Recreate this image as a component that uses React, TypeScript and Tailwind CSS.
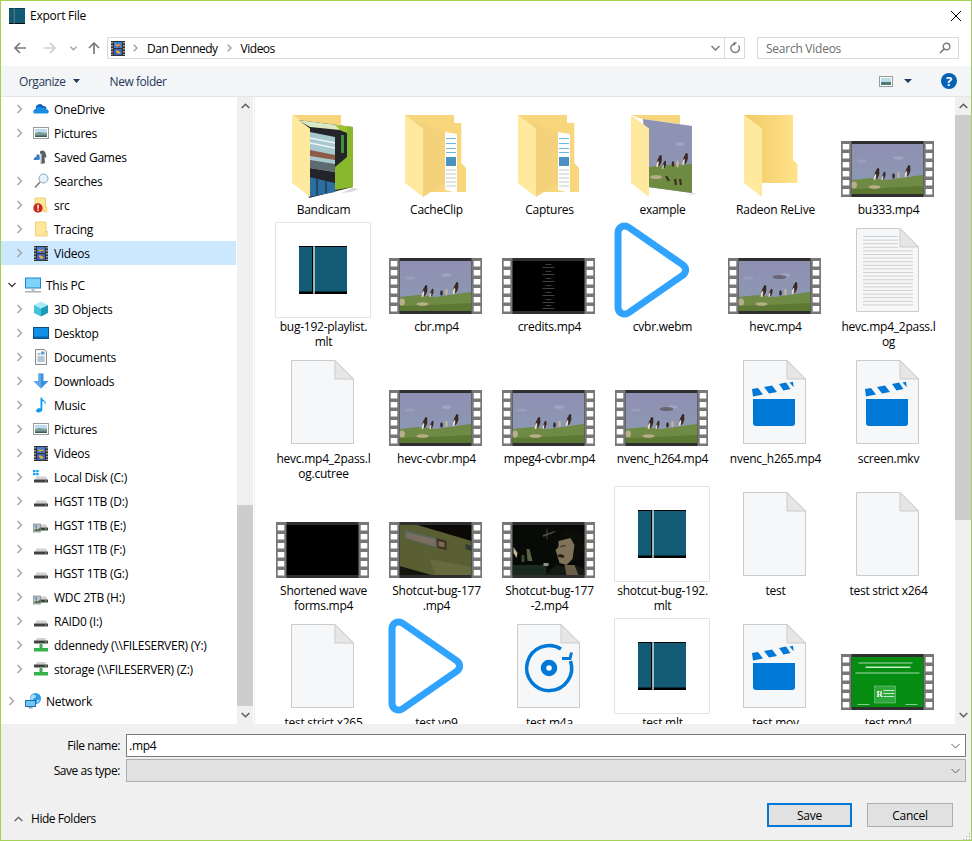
import type { ReactNode } from 'react';

type TreeIcon =
  | 'onedrive' | 'pictures' | 'games' | 'search' | 'src' | 'folder' | 'film' | 'pc' | 'cube' | 'desktop'
  | 'docs' | 'down' | 'music' | 'diskC' | 'disk' | 'diskPhoto' | 'net' | 'network';

type ThumbKind =
  | 'folder' | 'folderDoc' | 'folderBandicam' | 'folderPic' | 'mlt' | 'play' | 'doc' | 'log' | 'clapper' | 'groove'
  | 'puffin' | 'puffin2' | 'credits' | 'black' | 'building' | 'man' | 'green';

const favourites: { label: string; icon: TreeIcon; noArrow?: boolean; active?: boolean }[] = [
  { label: 'OneDrive', icon: 'onedrive' },
  { label: 'Pictures', icon: 'pictures' },
  { label: 'Saved Games', icon: 'games', noArrow: true },
  { label: 'Searches', icon: 'search' },
  { label: 'src', icon: 'src' },
  { label: 'Tracing', icon: 'folder' },
  { label: 'Videos', icon: 'film', active: true },
];

const pcItems: { label: string; icon: TreeIcon }[] = [
  { label: '3D Objects', icon: 'cube' },
  { label: 'Desktop', icon: 'desktop' },
  { label: 'Documents', icon: 'docs' },
  { label: 'Downloads', icon: 'down' },
  { label: 'Music', icon: 'music' },
  { label: 'Pictures', icon: 'pictures' },
  { label: 'Videos', icon: 'film' },
  { label: 'Local Disk (C:)', icon: 'diskC' },
  { label: 'HGST 1TB (D:)', icon: 'disk' },
  { label: 'HGST 1TB (E:)', icon: 'diskPhoto' },
  { label: 'HGST 1TB (F:)', icon: 'disk' },
  { label: 'HGST 1TB (G:)', icon: 'disk' },
  { label: 'WDC 2TB (H:)', icon: 'diskPhoto' },
  { label: 'RAID0 (I:)', icon: 'disk' },
  { label: 'ddennedy (\\\\FILESERVER) (Y:)', icon: 'net' },
  { label: 'storage (\\\\FILESERVER) (Z:)', icon: 'net' },
];

const files: { lines: string[]; kind: ThumbKind }[] = [
  { lines: ['Bandicam'], kind: 'folderBandicam' },
  { lines: ['CacheClip'], kind: 'folderDoc' },
  { lines: ['Captures'], kind: 'folderDoc' },
  { lines: ['example'], kind: 'folderPic' },
  { lines: ['Radeon ReLive'], kind: 'folder' },
  { lines: ['bu333.mp4'], kind: 'puffin' },
  { lines: ['bug-192-playlist.', 'mlt'], kind: 'mlt' },
  { lines: ['cbr.mp4'], kind: 'puffin' },
  { lines: ['credits.mp4'], kind: 'credits' },
  { lines: ['cvbr.webm'], kind: 'play' },
  { lines: ['hevc.mp4'], kind: 'puffin2' },
  { lines: ['hevc.mp4_2pass.l', 'og'], kind: 'log' },
  { lines: ['hevc.mp4_2pass.l', 'og.cutree'], kind: 'doc' },
  { lines: ['hevc-cvbr.mp4'], kind: 'puffin' },
  { lines: ['mpeg4-cvbr.mp4'], kind: 'puffin' },
  { lines: ['nvenc_h264.mp4'], kind: 'puffin2' },
  { lines: ['nvenc_h265.mp4'], kind: 'clapper' },
  { lines: ['screen.mkv'], kind: 'clapper' },
  { lines: ['Shortened wave', 'forms.mp4'], kind: 'black' },
  { lines: ['Shotcut-bug-177', '.mp4'], kind: 'building' },
  { lines: ['Shotcut-bug-177', '-2.mp4'], kind: 'man' },
  { lines: ['shotcut-bug-192.', 'mlt'], kind: 'mlt' },
  { lines: ['test'], kind: 'doc' },
  { lines: ['test strict x264'], kind: 'doc' },
  { lines: ['test strict x265'], kind: 'doc' },
  { lines: ['test.vp9'], kind: 'play' },
  { lines: ['test.m4a'], kind: 'groove' },
  { lines: ['test.mlt'], kind: 'mlt' },
  { lines: ['test.mov'], kind: 'clapper' },
  { lines: ['test.mp4'], kind: 'green' },
];

function ShotcutIcon({ size }: { size: number }) {
  return (
    <svg width={size} height={size} viewBox="0 0 48 48" className="shrink-0">
      <rect width="48" height="48" fill="#135a74" />
      <rect width="48" height="1" fill="#000" />
      <rect y="45.5" width="48" height="2.5" fill="#000" />
      <rect x="13" width="1.4" height="48" fill="#000" />
      <rect x="14.4" width="1.2" height="48" fill="#fff" />
    </svg>
  );
}

function SmallDisk() {
  return (
    <g>
      <path d="M2 10.500L3.500 7.500h9.500l1.500 3z" fill="#d0d0d0" />
      <rect x="1" y="10.500" width="14" height="3" rx="0.500" fill="#404040" />
      <rect x="12" y="11.500" width="1.500" height="1" fill="#5fe04c" />
    </g>
  );
}

function TreeGlyph({ name }: { name: TreeIcon }) {
  const body: Record<TreeIcon, ReactNode> = {
    onedrive: (
      <>
        <path d="M3 8.500a4 4 0 0 1 7.200-3.400A3 3 0 0 1 13.500 8H3z" fill="#0a5fb4" />
        <path d="M1 12.500a2.600 2.600 0 0 1 1.800-4.400 3.400 3.400 0 0 1 6.200-1 2.800 2.800 0 0 1 4 1.300 2.200 2.200 0 0 1 1.500 4.100z" fill="#1c8be4" />
      </>
    ),
    pictures: (
      <>
        <rect x="0.500" y="2.500" width="15" height="11" fill="#fff" stroke="#9a9a9a" />
        <rect x="2" y="4" width="12" height="4" fill="#bcdcec" />
        <path d="M2 8l4-1 8 1v4H2z" fill="#7a9c92" />
        <rect x="2" y="10.500" width="12" height="1.500" fill="#3a5a50" />
      </>
    ),
    games: (
      <>
        <path d="M7 2.500c2-2 5-1 5.500 1.500l1 4-2 1 .5 5c-2 1-4 1-5 0V6.500z" fill="#5a5f66" />
        <path d="M7 5c1-1 2 0 1.500 2v7c-1 .5-1.500 0-1.500-1z" fill="#d9dde0" />
        <circle cx="5" cy="7" r="1.700" fill="#3d7fc9" />
        <path d="M0.500 11c0-2.500 2-3.500 4.500-3.500 1.500 0 2 1 2 2l-1 1.500H0.500z" fill="#3d7fc9" />
      </>
    ),
    search: (
      <>
        <circle cx="10.500" cy="5.500" r="4.500" fill="#e3f2fd" stroke="#8ba2b3" />
        <path d="M7 9l-5 5.500" stroke="#7d7d7d" strokeWidth="1.600" />
      </>
    ),
    src: (
      <>
        <path d="M2 1h10.500v13H2z" fill="#ffe89a" stroke="#e7c669" strokeWidth="0.800" />
        <rect x="11.500" y="10" width="2.500" height="5" fill="#ffe89a" stroke="#e7c669" strokeWidth="0.600" />
        <circle cx="5" cy="11" r="4.700" fill="#c7281b" />
        <rect x="4.300" y="7.700" width="1.500" height="4" fill="#fff" />
        <rect x="4.300" y="12.500" width="1.500" height="1.400" fill="#fff" />
      </>
    ),
    folder: (
      <>
        <path d="M2.500 1h10.500v14H2.500z" fill="#ffe89a" stroke="#e7c669" strokeWidth="0.800" />
        <rect x="12" y="10.500" width="2.500" height="4.500" fill="#ffe89a" stroke="#e7c669" strokeWidth="0.600" />
      </>
    ),
    film: (
      <>
        <rect x="1" y="1" width="14" height="15" fill="#333" />
        <path d="M2 2v1.500M2 5v1.500M2 8v1.500M2 11v1.500M2 14v1M14 2v1.500M14 5v1.500M14 8v1.500M14 11v1.500M14 14v1" stroke="#d8d8d8" strokeWidth="1.200" />
        <rect x="4" y="2" width="8" height="6" fill="#3b7dd6" />
        <rect x="4" y="9" width="8" height="6" fill="#3563c4" />
        <path d="M5 3l2 2 2-1 2 2-2 1-3-1zM6 10l3 1 2 2-3 1-2-2z" fill="#e8ae2b" />
        <circle cx="9" cy="6.500" r="1" fill="#c42d2d" />
      </>
    ),
    pc: (
      <>
        <rect x="0" y="0.500" width="16" height="11" fill="#1c84d4" />
        <rect x="1" y="1.500" width="14" height="9" fill="#7fd3fb" />
        <rect x="6.500" y="11.500" width="3" height="2.500" fill="#b8bfc6" />
        <rect x="0" y="14" width="16" height="1.500" fill="#a9b3bc" />
      </>
    ),
    cube: (
      <>
        <path d="M8 0.500l7 3.500-7 3.500L1 4z" fill="#a6ecf4" />
        <path d="M1 4l7 3.500v8L1 12z" fill="#44c3d8" />
        <path d="M15 4L8 7.500v8l7-3.500z" fill="#1b9cb8" />
      </>
    ),
    desktop: (
      <>
        <rect x="0.500" y="2.500" width="15" height="11" fill="#0e90e8" stroke="#0b4f85" />
        <rect x="1" y="11.500" width="14" height="1.500" fill="#0a63a8" />
      </>
    ),
    docs: (
      <>
        <path d="M2.500 0.500h9l2 2v13h-11z" fill="#f6f6f6" stroke="#8b8b8b" />
        <path d="M4.500 5h3M4.500 8h7M4.500 10h7M4.500 12h7" stroke="#6d95b5" />
        <rect x="8" y="2.500" width="3.500" height="3" fill="#5aa3d6" />
      </>
    ),
    down: (
      <>
        <path d="M5.500 0.500h5v7.500H15.500L8 15.500.5 8h5z" fill="#3a90e0" />
        <path d="M8 15.500L.5 8h5V.5H8z" fill="#5ba9ee" />
      </>
    ),
    music: (
      <path d="M7.500 0.500h1.300c.5 3 5 3 4 7.500-.5-2.500-2-3.500-3.500-3.800V12.500c0 2-2 3-4 3s-2.500-1.500-2-2.500c.7-1.500 2.800-2 4.200-1.500z" fill="#0d9af2" />
    ),
    diskC: (
      <>
        <SmallDisk />
        <path d="M0 1h2.500v2.300H0zM3.200 1h2.500v2.300H3.200zM0 4h2.500v2.300H0zM3.200 4h2.500v2.300H3.200z" fill="#12a5f4" />
      </>
    ),
    disk: <SmallDisk />,
    diskPhoto: (
      <>
        <SmallDisk />
        <rect x="0.500" y="7" width="7" height="8" fill="#b7c3c9" stroke="#6b7378" strokeWidth="0.600" />
        <circle cx="3" cy="9.500" r="1" fill="#3f79b3" />
        <path d="M1 14l2-2.500 2 1 2-2v3.500z" fill="#4f6f4a" />
      </>
    ),
    net: (
      <>
        <path d="M2.500 3.500L4 1h8l1.500 2.500z" fill="#d0d0d0" />
        <rect x="1" y="3.500" width="14" height="3" rx="0.500" fill="#404040" />
        <rect x="12" y="4.500" width="1.500" height="1" fill="#5fe04c" />
        <rect x="6.500" y="7" width="3" height="4" fill="#32b34a" />
        <rect x="1" y="11" width="14" height="3.500" fill="#32b34a" />
      </>
    ),
    network: (
      <>
        <circle cx="10.500" cy="5.500" r="5.500" fill="#2c9ae8" />
        <path d="M7 2c2-1 4 0 4 1.500S8.500 5 8 7 6 8 5.500 6.500 6 3 7 2zM12 7l2.500-.5c0 2-1 3-2.500 3.500z" fill="#a5dcf8" />
        <rect x="0.500" y="7.500" width="10" height="6" fill="#74c6f5" stroke="#1c6fae" />
        <rect x="3.500" y="14" width="4" height="1.500" fill="#9aa5ad" />
      </>
    ),
  };
  return (
    <svg width="16" height="16" viewBox="0 0 16 16" className="shrink-0">
      {body[name]}
    </svg>
  );
}

function Arrow({ open, hidden }: { open?: boolean; hidden?: boolean }) {
  return (
    <svg width="8" height="10" viewBox="0 0 8 10" className={hidden ? 'invisible shrink-0' : 'shrink-0'}>
      {open ? (
        <path d="M0.500 3l3.500 3.500L7.500 3" fill="none" stroke="#404040" strokeWidth="1.400" />
      ) : (
        <path d="M1.500 1l4 4-4 4" fill="none" stroke="#a6a6a6" strokeWidth="1.500" />
      )}
    </svg>
  );
}

function ScrollArrow({ up }: { up?: boolean }) {
  return (
    <div className="h-[18px] flex items-center justify-center shrink-0">
      <svg width="9" height="6" viewBox="0 0 9 6">
        <path d={up ? 'M0.700 5L4.500 1.300 8.300 5' : 'M0.700 1L4.500 4.700 8.300 1'} fill="none" stroke="#5f5f5f" strokeWidth="1.600" />
      </svg>
    </div>
  );
}

function Bird({ x, y, s = 1 }: { x: number; y: number; s?: number }) {
  return (
    <g transform={`translate(${x} ${y}) scale(${s})`}>
      <ellipse cx="0.300" cy="1.500" rx="2.200" ry="4.800" transform="rotate(16 0.300 1.500)" fill="#3a2a23" />
      <path d="M-2.600 4.500c.4-2 1.200-3.200 2.100-3.700.5 1.800.3 4.400-.9 6.200h-1.300z" fill="#e4ddd0" />
      <circle cx="1.500" cy="-3.400" r="1.300" fill="#2e211c" />
    </g>
  );
}

function Scene({ kind }: { kind: ThumbKind }) {
  if (kind === 'black') return <rect width="72" height="50" fill="#000" />;
  if (kind === 'credits') {
    return (
      <g>
        <rect width="72" height="50" fill="#000" />
        {[3, 6, 10, 13, 17, 20, 24, 27, 31, 34, 38, 41, 44, 47].map((y, i) => (
          <rect key={y} x={i % 2 ? 30 : 33} y={y} width={i % 2 ? 12 : 6} height="0.600" fill="#6a6a6a" />
        ))}
      </g>
    );
  }
  if (kind === 'building') {
    return (
      <g className="blur-[0.5px]">
        <rect width="72" height="50" fill="#0a0906" />
        <path d="M0 0h18l54 16v34H0z" fill="#5a5e33" />
        <path d="M30 34l42 8v8H36z" fill="#666b3f" />
        <path d="M0 41l32 9H0z" fill="#14160e" />
        <path d="M5 5l32 8v10L5 13z" fill="#56675a" />
        <path d="M7 7.500l29 7v7L7 13z" fill="#7c6d62" />
        <path d="M37 13l10 3v9l-9-2z" fill="#3c2f1e" />
        <path d="M39 16l6 1.500v5L39 21z" fill="#7d6a55" />
        <path d="M66 19l6 2v5l-6-2z" fill="#2d3b34" />
      </g>
    );
  }
  if (kind === 'man') {
    return (
      <g className="blur-[0.5px]">
        <rect width="72" height="50" fill="#070a06" />
        <rect y="40" width="34" height="10" fill="#1a2a20" />
        <path d="M30 10l12-4 1 1-12 5zM34 4h1v10h-1z" fill="#4b4a3e" />
        <path d="M1 22l4 6-1 5-3-5z" fill="#c2b896" />
        <path d="M14 24h3l3 12h-5z" fill="#5c6443" />
        <path d="M9 30h3v7H9z" fill="#3c4a34" />
        <path d="M31 38h5v3h-5z" fill="#8e9381" />
        <path d="M32 50l12-10 10 2v8z" fill="#141a15" />
        <path d="M62 40l10 4v6h-6z" fill="#141a15" />
        <path d="M52 40h10l4 10H54z" fill="#6a5f4b" />
        <path d="M46 16l4-10 12-2 8 6 2 14-6 12h-6l2-16-4-7z" fill="#0c0c08" />
        <path d="M46 16l12-3 4 7-2 14-6 6-7-2-3-10-1-3 3-3z" fill="#7f7259" />
        <path d="M45 30c2-1 5-1 7 1l-1 2-5-1z" fill="#2a2115" />
        <path d="M48 21l5-1v1l-5 1z" fill="#2a2115" />
      </g>
    );
  }
  if (kind === 'green') {
    return (
      <g className="blur-[0.25px]">
        <rect width="72" height="50" fill="#058d12" />
        <rect x="7" y="5.500" width="54" height="1" fill="#a8dcae" />
        <rect x="14" y="9.500" width="45" height="1.500" fill="#c7ecca" />
        <rect x="4" y="15.500" width="64" height="1" fill="#a8dcae" />
        <rect x="23" y="29" width="21" height="17" fill="#2ea83a" stroke="#9ad4a0" strokeWidth="0.500" />
        <text x="25" y="40" fill="#fff" fontSize="9" fontWeight="700" fontFamily="'Liberation Serif', serif" letterSpacing="0">R</text>
        <rect x="32" y="33" width="11" height="1" fill="#c3e8c7" />
        <rect x="32" y="36" width="11" height="1" fill="#c3e8c7" />
        <rect x="32" y="39" width="11" height="1" fill="#c3e8c7" />
        <rect x="6" y="47" width="12" height="0.800" fill="#a8dcae" />
        <rect x="54" y="47" width="12" height="0.800" fill="#a8dcae" />
      </g>
    );
  }
  return (
    <g className="blur-[0.3px]">
      <rect width="72" height="50" fill="url(#sky)" />
      <ellipse cx="47" cy="14" rx="5" ry="1.800" fill="#a0a5c2" />
      <ellipse cx="10" cy="17" rx="5" ry="1.500" fill="#9a9fbe" />
      <path d="M0 36l19-2 17 2 35-5h1v19H0z" fill="#6f8a44" />
      <path d="M0 45l30-1 42-2v8H0z" fill="#5c7833" />
      <ellipse cx="2.500" cy="41" rx="3" ry="3.500" fill="#b8ae88" />
      <ellipse cx="23" cy="43" rx="6" ry="1.800" fill="#b8ae88" />
      <Bird x={25} y={29} />
      <Bird x={32} y={31} s={0.7} />
      <ellipse cx="42" cy="32" rx="1.300" ry="2.700" fill="#33271f" />
      <ellipse cx="47" cy="31" rx="1.200" ry="3.200" fill="#c4b59c" />
      <Bird x={56} y={26} />
      {kind === 'puffin2' && <ellipse cx="41" cy="16" rx="7" ry="2" fill="#5c5158" opacity="0.700" />}
    </g>
  );
}

function Film({ kind }: { kind: ThumbKind }) {
  return (
    <>
      <rect x="1" y="36" width="93" height="56" fill="#2f2f2f" />
      <rect x="1" y="36" width="10.500" height="56" fill="#777" />
      <rect x="83.500" y="36" width="10.500" height="56" fill="#777" />
      {[0, 1, 2, 3, 4, 5].map((i) => (
        <g key={i}>
          <rect x="2.700" y={39 + i * 9} width="6.600" height="5.500" fill="#fff" />
          <rect x="85.700" y={39 + i * 9} width="6.600" height="5.500" fill="#fff" />
        </g>
      ))}
      <svg x="11.500" y="39" width="72" height="50" viewBox="0 0 72 50">
        <Scene kind={kind} />
      </svg>
    </>
  );
}

function Page({ children }: { children?: ReactNode }) {
  return (
    <>
      <path d="M16.500 6.500H60L78.500 25v64.500h-62z" fill="#f6f7f8" stroke="#cbcbcb" />
      <path d="M60 6.500V25h18.500z" fill="#e6e6e6" stroke="#cbcbcb" />
      {children}
    </>
  );
}

function FolderFlap() {
  return <path d="M17 10l18 13.500V92L17 78z" fill="#ffe99f" />;
}

function Thumb({ kind }: { kind: ThumbKind }) {
  if (kind === 'mlt') {
    return (
      <div className="w-24 h-24 border border-[#e3e3e3] rounded-[1px] flex items-center justify-center">
        <ShotcutIcon size={48} />
      </div>
    );
  }
  let art: ReactNode;
  if (kind === 'folder') {
    art = (
      <>
        <path d="M17 10h49v45l4.500 4v19H35z" fill="url(#folderBody)" />
        <FolderFlap />
      </>
    );
  } else if (kind === 'folderDoc') {
    art = (
      <>
        <path d="M17 10h49v8h7.300v40l4.700 5v24H35z" fill="#f8d67c" />
        <path d="M57 27l12 2v59l-12-3z" fill="#fdfdfd" />
        {[33, 38, 43, 47].map((y) => (
          <rect key={y} x="58" y={y} width="10" height="0.900" fill="#5bb0e2" />
        ))}
        <rect x="58" y="52" width="10" height="9" fill="#4a93c0" />
        <path d="M58 65h10M58 69h10M58 73h10M58 77h10M58 81h10" stroke="#c6cdd2" />
        <path d="M27 14l30 14v50l-22 14z" fill="#f4d27b" />
        <FolderFlap />
      </>
    );
  } else if (kind === 'folderBandicam') {
    art = (
      <>
        <path d="M17 10h49v12H35z" fill="#f8d67c" />
        <path d="M23 15l55 7v60l-44 11z" fill="#23252a" />
        <path d="M23 15l55 7v8l-13-5-30-3z" fill="#dbe8c4" />
        <path d="M60 20l18 2v8l-13-5z" fill="#9cc02e" />
        <path d="M35 27l25 5v35l-25-4z" fill="#a7c8cf" />
        <path d="M35 33l25 5M35 38l25 5" stroke="#eef4f6" strokeWidth="1.300" />
        <path d="M35 45l25 5v5l-25-4z" fill="#8e5b48" />
        <path d="M35 55l25 4v8l-25-4z" fill="#5d6a70" />
        <path d="M34 72l26 6v9l-26 5z" fill="#2c6ea0" />
        <path d="M42 74v16M51 76v12" stroke="#16222c" />
        <path d="M72 22h6v60l-18 3V62l12-10z" fill="#8ab82c" />
        <path d="M66 30h3v18h-3z" fill="#3f8f3a" />
        <path d="M78 83l6 1-8 3-10 1z" fill="#d8d8d8" />
        <FolderFlap />
      </>
    );
  } else if (kind === 'folderPic') {
    art = (
      <>
        <path d="M17 10h49v9l-38-5z" fill="#f8d67c" />
        <path d="M29 14l49 7v67l-44-6z" fill="#8e93b4" />
        <ellipse cx="66" cy="39" rx="4" ry="1.800" fill="#a2a7c3" />
        <path d="M34 62l18-2 26-1v29l-44-6z" fill="#6f8b42" />
        <ellipse cx="42" cy="72" rx="6" ry="2" fill="#b6ac86" />
        <Bird x={45} y={55} />
        <Bird x={50} y={59} s={0.7} />
        <ellipse cx="59" cy="59" rx="1.300" ry="3" fill="#3a2c25" />
        <ellipse cx="63.500" cy="59" rx="1.300" ry="3.500" fill="#c4b59c" />
        <Bird x={71} y={53} />
        <path d="M52 71l3 5M61 74l1 6M66 74l1 6" stroke="#3a3024" strokeWidth="2.200" />
        <path d="M78 88l6 1-10 1z" fill="#dcdcdc" />
        <FolderFlap />
      </>
    );
  } else if (kind === 'play') {
    art = (
      <path
        d="M4 11C4 5 10 2 15 5.500L69 43C72.500 46 72.500 50 69 53L15 90.500C10 94 4 91 4 85z"
        fill="none"
        stroke="#30a3ff"
        strokeWidth="7"
      />
    );
  } else if (kind === 'doc') {
    art = <Page />;
  } else if (kind === 'log') {
    art = (
      <Page>
        {Array.from({ length: 20 }, (_, i) => (
          <rect key={i} x="23" y={14 + i * 3.600} width={i < 4 ? 35 : 50} height="1" fill="#cfcfcf" />
        ))}
      </Page>
    );
  } else if (kind === 'clapper') {
    art = (
      <Page>
        <path d="M26 45h42v24a3 3 0 0 1-3 3H29a3 3 0 0 1-3-3z" fill="#0078d7" />
        <path d="M25 35l6-1 5 6.500-10 2zM37 33l8-1.500 5 6.500-8 1.500zM52 30l7-1.500 4.500 6.500-7 1.500zM62.500 28.500l3.500-.7.700 5.500z" fill="#0078d7" />
      </Page>
    );
  } else if (kind === 'groove') {
    art = (
      <Page>
        <path d="M60 31A22.500 22.500 0 1 0 69.500 43" fill="none" stroke="#0078d7" strokeWidth="3.500" />
        <path d="M61 40.500h8l1.500-6" fill="none" stroke="#0078d7" strokeWidth="3" />
        <circle cx="48" cy="50" r="5.500" fill="#fff" stroke="#0078d7" strokeWidth="5.500" />
      </Page>
    );
  } else {
    art = <Film kind={kind} />;
  }
  return (
    <svg width="96" height="96" viewBox="0 0 96 96" className="block">
      {art}
    </svg>
  );
}

function TreeRow({ label, icon, top, noArrow, open, active }: { label: string; icon: TreeIcon; top?: boolean; noArrow?: boolean; open?: boolean; active?: boolean }) {
  return (
    <div className={`h-6 flex items-center ${top ? 'pl-[7px]' : 'pl-[15px]'} ${active ? 'bg-[#cce8ff]' : ''}`}>
      <Arrow open={open} hidden={noArrow} />
      <div className="ml-[9px]">
        <TreeGlyph name={icon} />
      </div>
      <span className="ml-[5px] whitespace-nowrap">{label}</span>
    </div>
  );
}

function Chevron({ color = '#a0a0a0' }: { color?: string }) {
  return (
    <svg width="5" height="8" viewBox="0 0 5 8" className="shrink-0">
      <path d="M0.700 0.700L4 4 0.700 7.300" fill="none" stroke={color} strokeWidth="1.400" />
    </svg>
  );
}

function ComboArrow() {
  return (
    <svg width="9" height="6" viewBox="0 0 9 6" className="ml-auto mr-[5px] shrink-0">
      <path d="M0.500 1L4.500 5l4-4" fill="none" stroke="#606060" />
    </svg>
  );
}

export default function App() {
  return (
    <div className="w-[972px] h-[841px] flex flex-col overflow-hidden bg-white border border-[#a3d055] text-black text-xs leading-[15px] font-['Open_Sans',sans-serif] tracking-[-0.25px]">
      <div className="h-[29px] flex items-center pl-2 shrink-0">
        <ShotcutIcon size={16} />
        <span className="ml-[5px]">Export File</span>
        <svg width="10" height="10" viewBox="0 0 10 10" className="ml-auto mr-[10px]">
          <path d="M0 0l10 10M10 0L0 10" stroke="#000" strokeWidth="1" />
        </svg>
      </div>

      <div className="h-9 flex items-center pl-[13px] pr-3 shrink-0">
        <svg width="12" height="12" viewBox="0 0 12 12" className="shrink-0">
          <path d="M6 1L1 6l5 5M1 6h11" fill="none" stroke="#7b7b7b" strokeWidth="1.700" />
        </svg>
        <svg width="12" height="12" viewBox="0 0 12 12" className="ml-[18px] shrink-0">
          <path d="M6 1l5 5-5 5M11 6H0" fill="none" stroke="#cfcfcf" strokeWidth="1.700" />
        </svg>
        <svg width="7" height="5" viewBox="0 0 7 5" className="ml-[14px] shrink-0">
          <path d="M0.500 0.700L3.500 3.700l3-3" fill="none" stroke="#a0a0a0" strokeWidth="1.400" />
        </svg>
        <svg width="12" height="12" viewBox="0 0 12 12" className="ml-[11px] shrink-0">
          <path d="M1 6l5-5 5 5M6 1v11" fill="none" stroke="#7b7b7b" strokeWidth="1.700" />
        </svg>
        <div className="ml-[7px] flex-1 h-[22px] border border-[#d9d9d9] flex items-center pl-[2px]">
          <TreeGlyph name="film" />
          <div className="ml-[7px]"><Chevron /></div>
          <span className="ml-[9px] tracking-[-0.5px]">Dan Dennedy</span>
          <div className="ml-[9px]"><Chevron /></div>
          <span className="ml-[9px] tracking-[-0.5px]">Videos</span>
          <svg width="9" height="6" viewBox="0 0 9 6" className="ml-auto shrink-0">
            <path d="M0.500 1L4.500 5l4-4" fill="none" stroke="#7b7b7b" strokeWidth="1.500" />
          </svg>
          <div className="h-full w-5 ml-[4px] border-l border-[#d9d9d9] flex items-center justify-center shrink-0">
            <svg width="11" height="12" viewBox="0 0 11 12">
              <path d="M5 1h2.500M9.500 3.500A4.300 4.300 0 1 1 5 2" fill="none" stroke="#7b7b7b" strokeWidth="1.400" />
              <path d="M4.500 0L7 2 4.500 4z" fill="#7b7b7b" />
            </svg>
          </div>
        </div>
        <div className="ml-3 w-[202px] h-[22px] border border-[#d9d9d9] flex items-center pl-2 pr-[7px] text-[#6d6d6d] shrink-0">
          <span>Search Videos</span>
          <svg width="12" height="12" viewBox="0 0 12 12" className="ml-auto">
            <circle cx="7.500" cy="4.500" r="3.300" fill="none" stroke="#7b7b7b" strokeWidth="1.400" />
            <path d="M5 7l-4 4" stroke="#7b7b7b" strokeWidth="1.700" />
          </svg>
        </div>
      </div>

      <div className="h-[31px] flex items-center bg-[#f4f5f7] border-b border-[#e5e5e5] text-[#1e395b] pl-[18px] pr-[14px] shrink-0 tracking-[-0.45px]">
        <span>Organize</span>
        <svg width="7" height="4" viewBox="0 0 7 4" className="ml-[7px]">
          <path d="M0 0h7L3.500 4z" fill="#1e395b" />
        </svg>
        <span className="ml-[30px]">New folder</span>
        <svg width="14" height="11" viewBox="0 0 14 11" className="ml-auto">
          <rect x="0.500" y="0.500" width="13" height="10" fill="#fff" stroke="#9a9a9a" />
          <rect x="2" y="2" width="10" height="4" fill="#bcdcec" />
          <rect x="2" y="6" width="10" height="3" fill="#4f7a70" />
        </svg>
        <svg width="8" height="4" viewBox="0 0 8 4" className="ml-[11px]">
          <path d="M0 0h8L4 4z" fill="#1e395b" />
        </svg>
        <div className="ml-[29px] w-4 h-4 rounded-full bg-[#0561b5] text-white flex items-center justify-center font-bold text-[13px] tracking-normal">?</div>
      </div>

      <div className="flex-1 min-h-0 flex">
        <div className="w-[236px] shrink-0 overflow-hidden pr-px">
          {favourites.map((item) => (
            <TreeRow key={item.label} label={item.label} icon={item.icon} noArrow={item.noArrow} active={item.active} />
          ))}
          <div className="mt-2">
            <TreeRow label="This PC" icon="pc" top open />
            {pcItems.map((item) => (
              <TreeRow key={item.label + item.icon} label={item.label} icon={item.icon} />
            ))}
          </div>
          <div className="mt-2">
            <TreeRow label="Network" icon="network" top />
          </div>
        </div>
        <div className="w-4 shrink-0 bg-[#f0f0f0] flex flex-col">
          <ScrollArrow up />
          <div className="flex-1" />
          <div className="h-[201px] bg-[#cdcdcd] shrink-0" />
          <ScrollArrow />
        </div>
        <div className="w-[2px] shrink-0 border-r border-[#f0f0f0]" />

        <div className="flex-1 min-w-0 overflow-hidden pt-2 pl-3">
          <div className="grid grid-cols-[repeat(6,113px)]">
            {files.map((file, i) => (
              <div key={i} className="pb-[5px]">
                <div className="ml-2 w-24 h-24">
                  <Thumb kind={file.kind} />
                </div>
                <div className="mt-px text-center whitespace-nowrap">
                  {file.lines.map((line) => (
                    <div key={line}>{line}</div>
                  ))}
                </div>
              </div>
            ))}
          </div>
        </div>

        <div className="w-4 shrink-0 bg-[#f0f0f0] flex flex-col">
          <ScrollArrow up />
          <div className="h-[405px] bg-[#cdcdcd] shrink-0" />
          <div className="flex-1" />
          <ScrollArrow />
        </div>
      </div>

      <div className="relative h-[116px] shrink-0 bg-[#f0f0f0] pt-[10px] pr-[5px]">
        <div className="flex items-center h-[23px]">
          <span className="w-[119px] text-right shrink-0 tracking-[-0.45px]">File name:</span>
          <div className="ml-[6px] flex-1 h-full bg-white border border-[#7a7a7a] flex items-center pl-[2px]">
            <span>.mp4</span>
            <ComboArrow />
          </div>
        </div>
        <div className="flex items-center h-[23px] mt-[2px]">
          <span className="w-[119px] text-right shrink-0 tracking-[-0.45px]">Save as type:</span>
          <div className="ml-[6px] flex-1 h-full bg-[#e1e1e1] border border-[#adadad] flex items-center">
            <ComboArrow />
          </div>
        </div>
        <div className="flex h-6 mt-[21px] pl-[13px] pr-[13px]">
          <div className="self-end mb-px flex items-center">
            <svg width="9" height="6" viewBox="0 0 9 6">
              <path d="M0.700 5L4.500 1.300 8.300 5" fill="none" stroke="#5f5f5f" strokeWidth="1.300" />
            </svg>
            <span className="ml-2 tracking-[-0.45px]">Hide Folders</span>
          </div>
          <div className="ml-auto w-[85px] bg-[#e1e1e1] border-2 border-[#0078d7] flex items-center justify-center">Save</div>
          <div className="ml-[15px] w-[86px] bg-[#e1e1e1] border border-[#adadad] flex items-center justify-center">Cancel</div>
        </div>
        <svg width="8" height="8" viewBox="0 0 8 8" className="absolute right-0 bottom-0">
          <path d="M6 1h1v1H6zM6 4h1v1H6zM3 4h1v1H3zM6 7h1v1H6zM3 7h1v1H3zM0 7h1v1H0z" fill="#a8a8a8" />
        </svg>
      </div>

      <svg width="0" height="0" className="absolute">
        <defs>
          <linearGradient id="sky" x1="0" y1="0" x2="0" y2="1">
            <stop offset="0" stopColor="#8f90b2" />
            <stop offset="1" stopColor="#8b9ab3" />
          </linearGradient>
          <linearGradient id="folderBody" x1="0" y1="0" x2="1" y2="0">
            <stop offset="0" stopColor="#f1ca68" />
            <stop offset="1" stopColor="#ffe28a" />
          </linearGradient>
        </defs>
      </svg>
    </div>
  );
}
